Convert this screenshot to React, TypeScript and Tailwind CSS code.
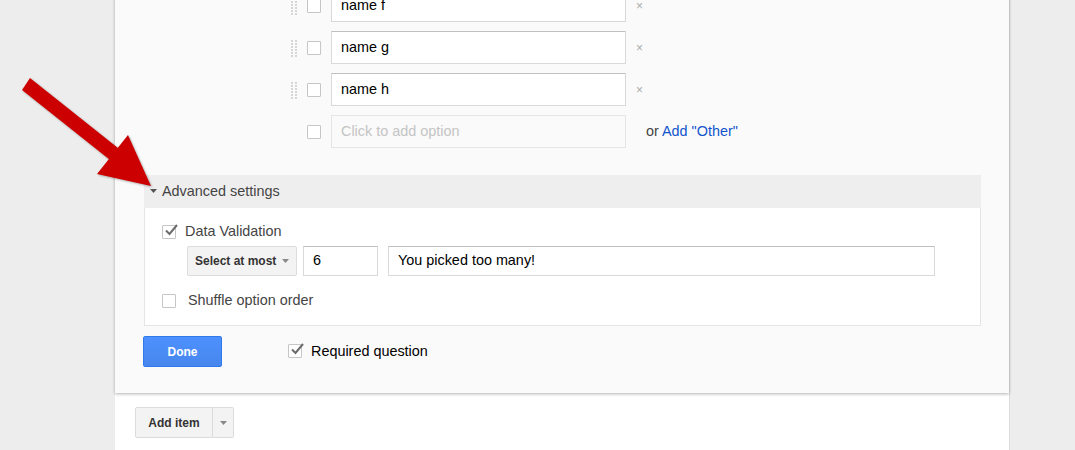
import React from 'react';

const Checkbox = ({ checked = false }: { checked?: boolean }) => (
  <span className="relative inline-block w-[14px] h-[14px] border border-[#c6c6c6] bg-white rounded-[1px] shrink-0">
    {checked && (
      <svg className="absolute left-[1px] top-[-4px]" width="15" height="15" viewBox="0 0 15 15">
        <path d="M2 8.5 L5.5 12 L13 3" fill="none" stroke="#6b6b6b" strokeWidth="2" />
      </svg>
    )}
  </span>
);

const DragHandle = () => (
  <svg width="8" height="18" viewBox="0 0 8 18" className="shrink-0">
    {[0, 1, 2, 3, 4, 5].map(r =>
      [0, 1].map(c => <rect key={`${r}-${c}`} x={1 + c * 4} y={1 + r * 3} width="2" height="2" fill="#d6d6d6" />)
    )}
  </svg>
);

const OptionRow = ({ label }: { label: string }) => (
  <div className="flex items-center h-[33px] mb-[9px]">
    <div className="w-[17px]"><DragHandle /></div>
    <Checkbox />
    <div className="ml-[10px] w-[295px] h-[33px] border border-[#d9d9d9] border-t-[#c0c0c0] bg-white flex items-center pl-[9px] text-[14.4px] text-black">
      {label}
    </div>
    <span className="ml-[10px] text-[12px] text-[#aaa] leading-none">×</span>
  </div>
);

export default function App() {
  return (
    <div className="relative h-[450px] overflow-hidden bg-[#ededed] font-['Liberation_Sans',Arial,sans-serif]">
      <div className="ml-[115px] w-[895px] min-h-[480px] bg-white border-r border-[#dcdcdc]">
        <div className="bg-[#fafafa] shadow-[0_1px_3px_rgba(0,0,0,0.3)] pl-[29px] pr-[28px] pb-[26px]">
          <div className="pl-[146px] -mt-[11px]">
            <OptionRow label="name f" />
            <OptionRow label="name g" />
            <OptionRow label="name h" />
            <div className="flex items-center h-[33px]">
              <div className="w-[17px]" />
              <Checkbox />
              <div className="ml-[10px] w-[295px] h-[33px] border border-[#e5e5e5] bg-[#fafafa] flex items-center pl-[9px] text-[14.4px] text-[#c4c4c4]">
                Click to add option
              </div>
              <span className="ml-[20px] text-[14.4px] text-[#444]">or <span className="text-[#1155cc]">Add "Other"</span></span>
            </div>
          </div>

          <div className="mt-[27px]">
            <div className="h-[33px] bg-[#eeeeee] flex items-center pl-[6px] text-[14.4px] text-[#444]">
              <svg width="8" height="5" viewBox="0 0 8 5" className="mr-[4px]"><path d="M0 0 H7 L3.5 4 Z" fill="#555" /></svg>
              Advanced settings
            </div>
            <div className="h-[118px] bg-white border border-t-0 border-[#e5e5e5] pl-[17px] pt-[17px]">
              <div className="flex items-center h-[14px]">
                <Checkbox checked />
                <span className="ml-[9px] text-[14.4px] text-[#444]">Data Validation</span>
              </div>
              <div className="flex items-center mt-[7px] ml-[25px] h-[30px]">
                <div className="w-[110px] h-[30px] border border-[#dcdcdc] rounded-[2px] bg-[#f3f3f3] flex items-center pl-[7px] text-[12px] font-bold text-[#333]">
                  Select at most
                  <svg width="7" height="4" viewBox="0 0 7 4" className="ml-[6px]"><path d="M0 0 H7 L3.5 4 Z" fill="#888" /></svg>
                </div>
                <div className="ml-[6px] w-[75px] h-[30px] border border-[#d9d9d9] border-t-[#c0c0c0] flex items-center pl-[9px] text-[14.4px] text-black">6</div>
                <div className="ml-[10px] w-[547px] h-[30px] border border-[#d9d9d9] border-t-[#c0c0c0] flex items-center pl-[9px] text-[14.4px] text-black">You picked too many!</div>
              </div>
              <div className="flex items-center mt-[18px] h-[14px]">
                <Checkbox />
                <span className="ml-[12px] text-[14.4px] text-[#444]">Shuffle option order</span>
              </div>
            </div>
          </div>

          <div className="flex items-center mt-[10px] -ml-[1px]">
            <div className="w-[79px] h-[31px] rounded-[2px] border border-[#3079ed] bg-gradient-to-b from-[#4d90fe] to-[#4787ed] flex items-center justify-center text-[12px] font-bold text-white">
              Done
            </div>
            <div className="ml-[66px] flex items-center">
              <Checkbox checked />
              <span className="ml-[9px] text-[14.4px] text-black">Required question</span>
            </div>
          </div>
        </div>

        <div className="flex mt-[14px] ml-[20px]">
          <div className="w-[78px] h-[31px] border border-[#dcdcdc] rounded-l-[2px] bg-[#f3f3f3] flex items-center justify-center text-[12px] font-bold text-[#333]">
            Add item
          </div>
          <div className="w-[21px] h-[31px] border border-l-0 border-[#dcdcdc] rounded-r-[2px] bg-[#f3f3f3] flex items-center justify-center">
            <svg width="7" height="4" viewBox="0 0 7 4"><path d="M0 0 H7 L3.5 4 Z" fill="#888" /></svg>
          </div>
        </div>
      </div>

      <svg className="absolute left-0 top-0 pointer-events-none" width="200" height="220" viewBox="0 0 200 220">
        <g style={{ filter: 'drop-shadow(1px 1px 1px rgba(0,0,0,0.3))' }}>
          <path d="M22 90 L30 78 L118 148 L110 160 Z" fill="#cc0000" />
          <path d="M128 135 L97 174 L151 186 Z" fill="#cc0000" />
        </g>
      </svg>
    </div>
  );
}
